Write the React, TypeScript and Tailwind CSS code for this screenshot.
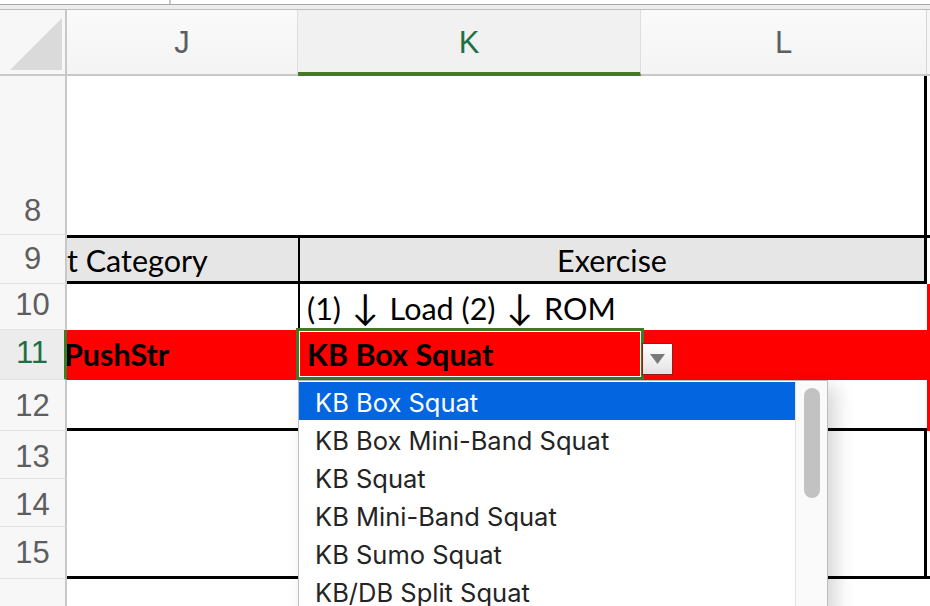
import React from "react";

const cellFont = "font-['Lato','DejaVu_Sans',sans-serif] text-[30.5px] leading-none text-black";
const headFont = "font-['Liberation_Sans',Arial,sans-serif] text-[31px] leading-none";

const items = [
  "KB Box Squat",
  "KB Box Mini-Band Squat",
  "KB Squat",
  "KB Mini-Band Squat",
  "KB Sumo Squat",
  "KB/DB Split Squat",
];

function RowHead({ n, active, pb = "pb-[9px]" }: { n?: number; active?: boolean; pb?: string }) {
  return (
    <div
      className={`w-[67px] shrink-0 flex items-end justify-center border-b border-[#e2e2e2] ${pb} ${headFont} ${
        active
          ? "bg-[#ececec] text-[#1e7145] border-r-[3px] border-r-[#3f7a24]"
          : "bg-[#f7f7f7] text-[#5e5e5e] border-r-2 border-r-[#c8c8c8]"
      }`}
    >
      {n}
    </div>
  );
}

function Arrow() {
  return <span className="text-[36px] leading-none mx-[3px]">↓</span>;
}

export default function App() {
  return (
    <div className="relative w-[930px] h-[606px] overflow-hidden bg-white">
      {/* formula bar edge */}
      <div className="h-[4px] flex">
        <div className="w-[171px] border-r-[2px] border-[#c9c9c9]" />
      </div>
      <div className="h-[6px] border-t border-b border-t-[#a6a6a6] border-b-[#bdbdbd] bg-[#ededed]" />

      {/* column headers */}
      <div className={`flex h-[66px] ${headFont}`}>
        <div className="w-[67px] shrink-0 bg-[#f7f7f7] border-r-2 border-b-2 border-[#c8c8c8] relative">
          <svg width="65" height="64" className="absolute left-0 top-0">
            <polygon points="10,60 62,8 62,60" fill="#dadada" />
          </svg>
        </div>
        <div className="w-[231px] shrink-0 flex items-center justify-center bg-gradient-to-b from-[#fafafa] to-[#f4f4f4] text-[#5e5e5e] border-b-2 border-[#c8c8c8] border-r border-r-[#dedede]">
          J
        </div>
        <div className="w-[343px] shrink-0 flex items-center justify-center bg-[#f1f1f1] text-[#1e7145] border-b-4 border-[#457a25] border-r border-r-[#dedede] pt-[2px]">
          K
        </div>
        <div className="w-[286px] shrink-0 flex items-center justify-center bg-gradient-to-b from-[#fafafa] to-[#f4f4f4] text-[#5e5e5e] border-b-2 border-[#c8c8c8] border-r border-r-[#d6d6d6]">
          L
        </div>
        <div className="flex-1 bg-[#f7f7f7] border-b-2 border-[#c8c8c8]" />
      </div>

      {/* row 8 */}
      <div className="flex h-[159px]">
        <RowHead n={8} pb="pb-[8px]" />
        <div className="w-[231px] shrink-0" />
        <div className="w-[343px] shrink-0" />
        <div className="w-[286px] shrink-0 border-r-[3px] border-black" />
        <div className="flex-1" />
      </div>

      {/* row 9 */}
      <div className="flex h-[49px]">
        <RowHead n={9} />
        <div className={`w-[231px] shrink-0 flex items-end overflow-hidden bg-[#e6e6e6] border-t-[3px] border-b-[3px] border-black pb-[6px] ${cellFont}`}>
          <span className="whitespace-nowrap">t Category</span>
        </div>
        <div className={`w-[629px] shrink-0 flex items-end justify-center bg-[#e6e6e6] border-t-[3px] border-b-[3px] border-l-2 border-r-[3px] border-black pb-[6px] ${cellFont}`}>
          Exercise
        </div>
        <div className="flex-1 border-t-[3px] border-black" />
      </div>

      {/* row 10 */}
      <div className="flex h-[46px]">
        <RowHead n={10} />
        <div className="w-[231px] shrink-0" />
        <div className={`w-[343px] shrink-0 flex items-end border-l-2 border-black pl-[7px] pb-[6px] whitespace-nowrap ${cellFont}`}>
          <span>
            (1) <Arrow /> Load (2) <Arrow /> ROM
          </span>
        </div>
        <div className="w-[286px] shrink-0" />
        <div className="flex-1 bg-[#ff0000]" />
      </div>

      {/* row 11 */}
      <div className="flex h-[50px]">
        <RowHead n={11} active pb="pb-[11px]" />
        <div className={`w-[231px] shrink-0 flex items-end overflow-hidden bg-[#ff0000] pb-[11px] font-bold ${cellFont}`}>
          <span className="-ml-[3px] whitespace-nowrap">PushStr</span>
        </div>
        <div className={`w-[343px] shrink-0 flex items-end bg-[#ff0000] pl-[9px] pb-[11px] font-bold ${cellFont}`}>
          KB Box Squat
        </div>
        <div className="w-[286px] shrink-0 bg-[#ff0000]" />
        <div className="flex-1 bg-[#ff0000]" />
      </div>

      {/* row 12 */}
      <div className="flex h-[51px]">
        <RowHead n={12} />
        <div className="w-[231px] shrink-0 border-b-[3px] border-black" />
        <div className="w-[343px] shrink-0 border-b-[3px] border-black" />
        <div className="w-[286px] shrink-0 border-b-[3px] border-black" />
        <div className="flex-1 bg-[#ff0000]" />
      </div>

      {/* rows 13-15 */}
      {[13, 14, 15].map((n) => (
        <div key={n} className={`flex ${n === 15 ? "h-[52px]" : "h-[48px]"}`}>
          <RowHead n={n} pb={n === 15 ? "pb-[10px]" : "pb-[6px]"} />
          <div className={`w-[231px] shrink-0 ${n === 15 ? "border-b-[3px] border-black" : ""}`} />
          <div className={`w-[343px] shrink-0 ${n === 15 ? "border-b-[3px] border-black" : ""}`} />
          <div className={`w-[286px] shrink-0 border-r-[3px] border-black ${n === 15 ? "border-b-[3px]" : ""}`} />
          <div className={`flex-1 ${n === 15 ? "border-b-[3px] border-black" : ""}`} />
        </div>
      ))}

      {/* row 16 */}
      <div className="flex h-[40px]">
        <RowHead />
        <div className="flex-1" />
      </div>

      {/* active cell selection */}
      <div className="absolute left-[296px] top-[328px] w-[348px] h-[52px] border-[3px] border-[#3f7a24] shadow-[inset_0_0_0_1px_#ffffff]" />

      {/* validation dropdown button */}
      <div className="absolute left-[642px] top-[343px] w-[31px] h-[32px] border border-[#9a1a1a] bg-gradient-to-b from-[#ffffff] to-[#e3e3e3] flex items-center justify-center">
        <svg width="15" height="10" viewBox="0 0 15 10">
          <polygon points="0,0 15,0 7.5,10" fill="#7a7a7a" />
        </svg>
      </div>

      {/* dropdown list */}
      <div className="absolute left-[298px] top-[380px] w-[530px] h-[240px] flex bg-white border border-[#bdbdbd] shadow-[8px_6px_18px_rgba(0,0,0,0.16)]">
        <div className="flex-1 pt-[1px] font-['Inter','Liberation_Sans',sans-serif] text-[25.5px] leading-none text-[#242424]">
          {items.map((it, i) => (
            <div
              key={it}
              className={`h-[38px] flex items-center pl-[16px] pt-[3px] whitespace-nowrap ${
                i === 0 ? "bg-[#0366e0] text-white" : ""
              }`}
            >
              {it}
            </div>
          ))}
        </div>
        <div className="w-[32px] shrink-0 bg-[#fafafa] border-l border-[#e4e4e4] pt-[7px]">
          <div className="mx-auto w-[16px] h-[110px] rounded-full bg-[#c2c2c2]" />
        </div>
      </div>
    </div>
  );
}
